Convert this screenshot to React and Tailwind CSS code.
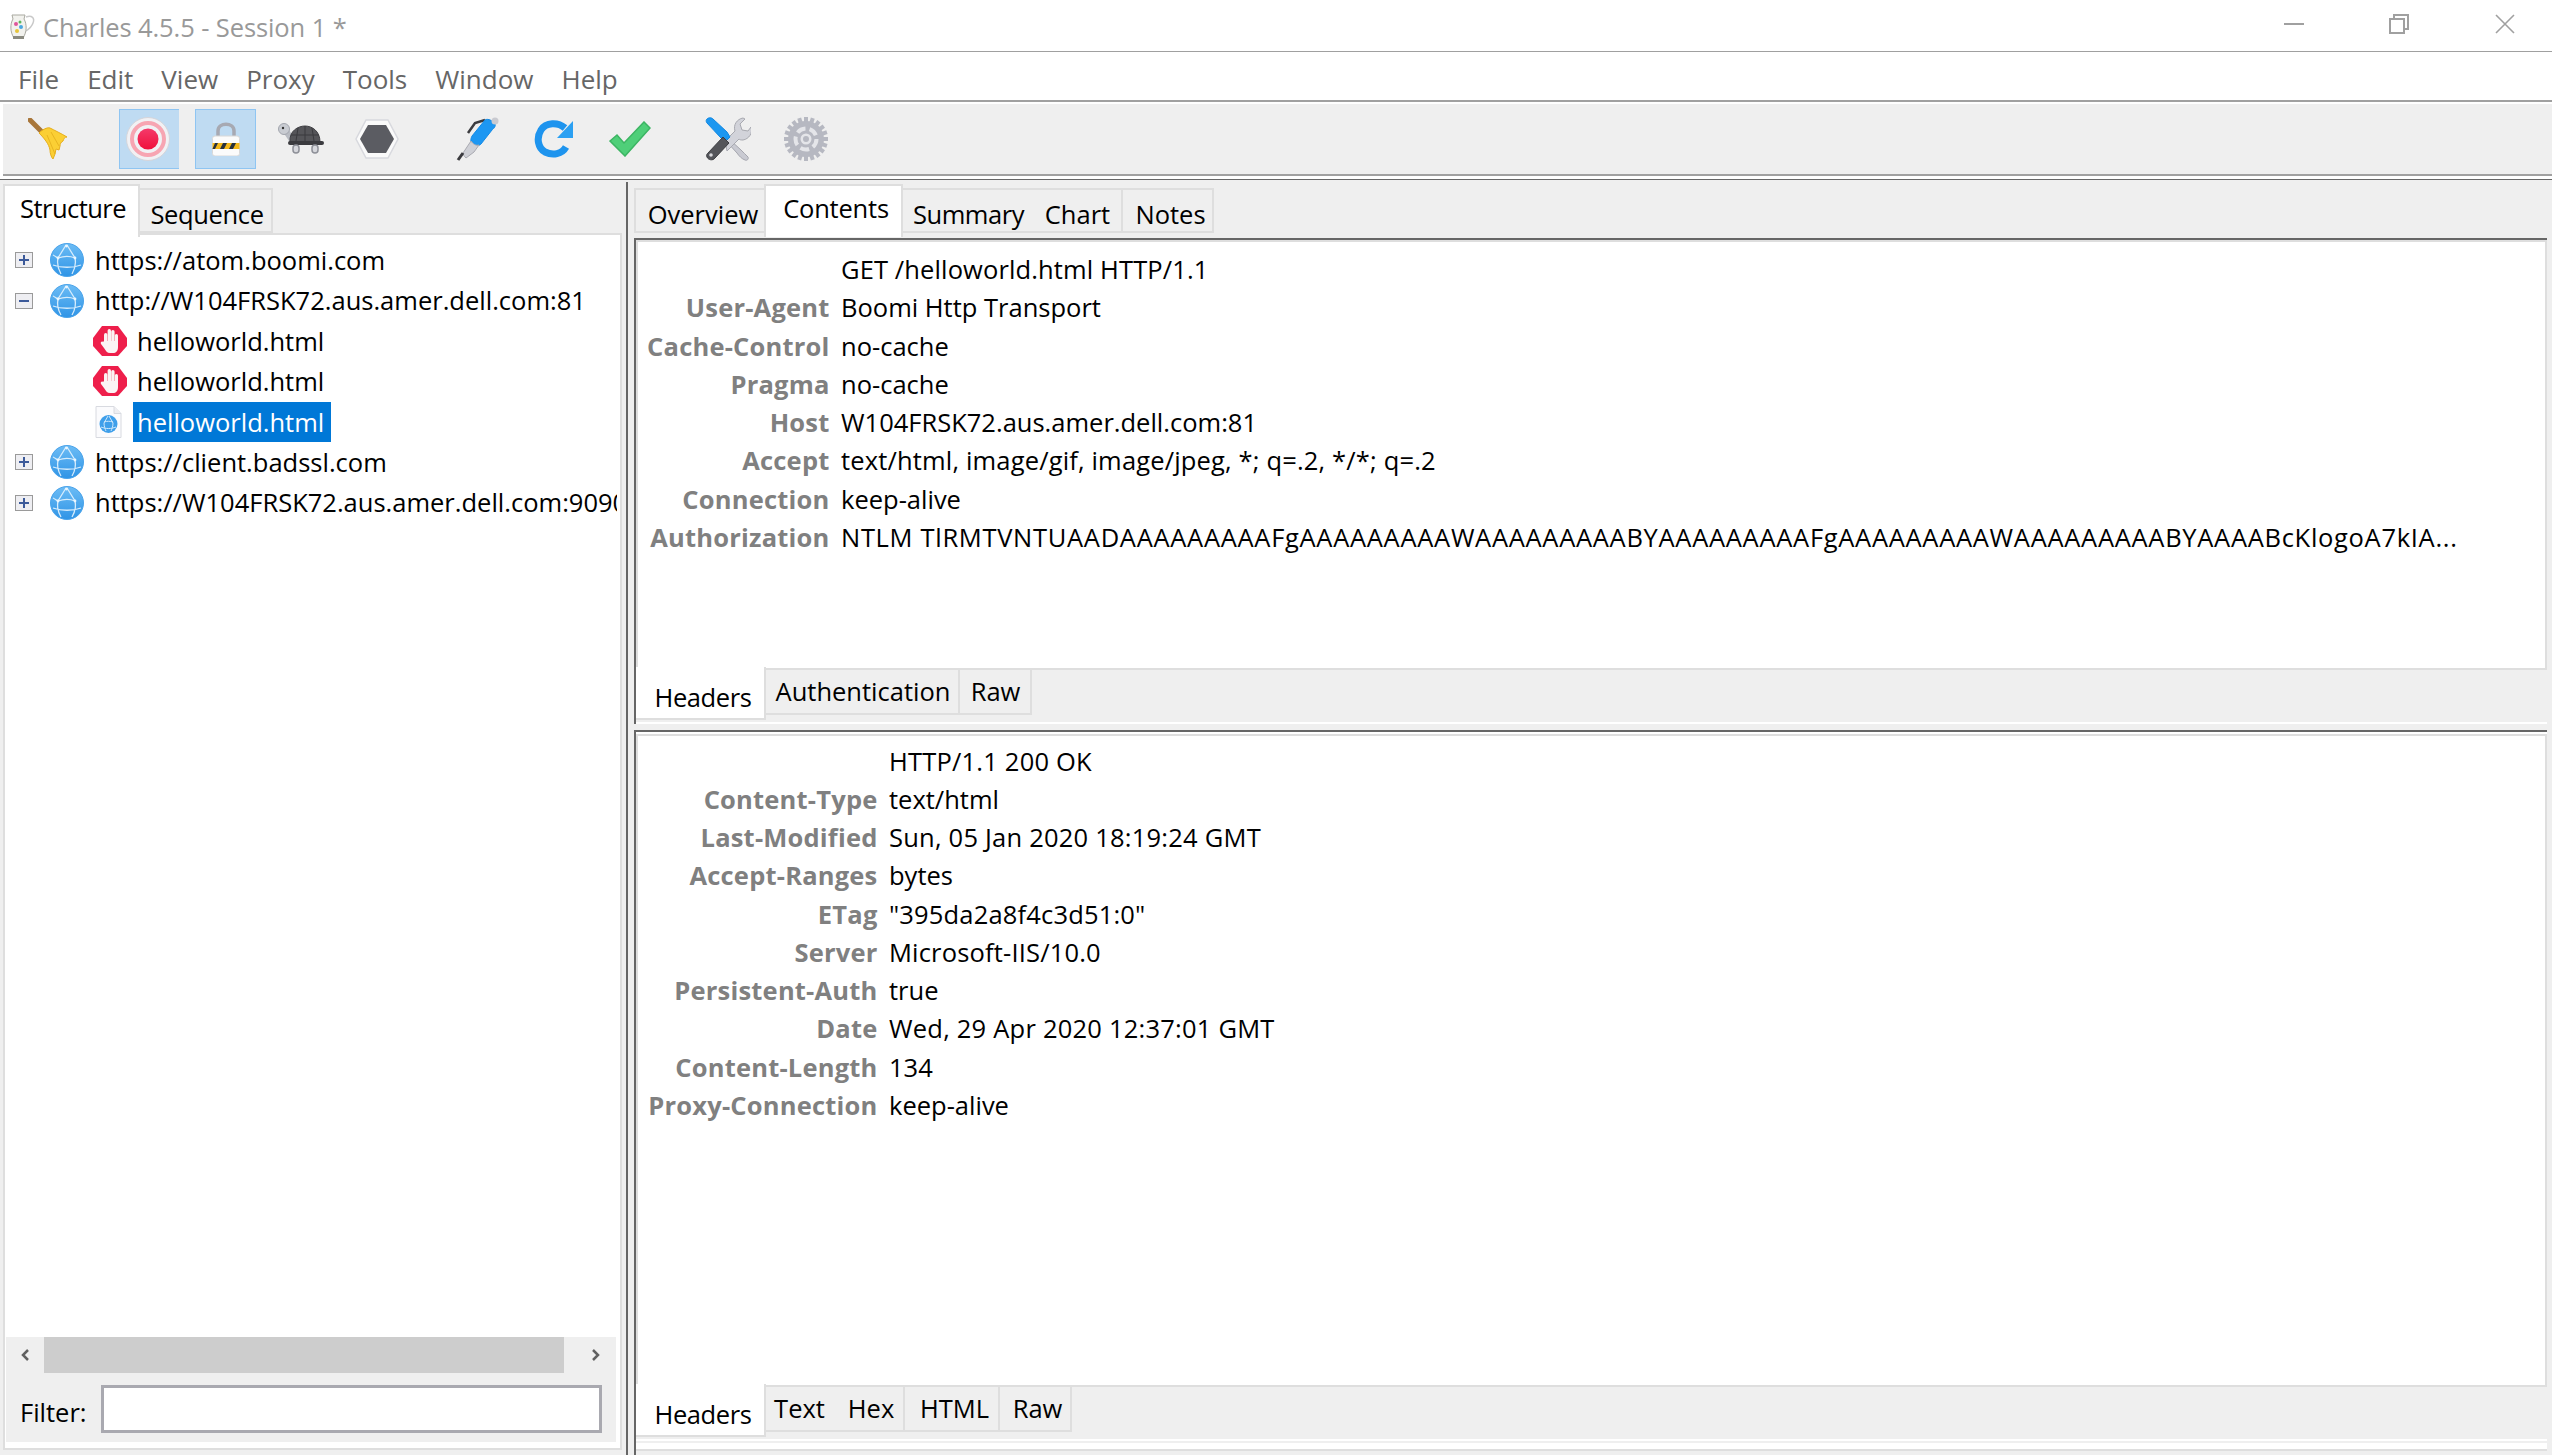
const FONT = "font-['Open_Sans','Noto_Sans',sans-serif]"

const MENUS = ['File', 'Edit', 'View', 'Proxy', 'Tools', 'Window', 'Help']

const REQUEST = [
  ['', 'GET /helloworld.html HTTP/1.1', 'tracking-[0.12px]'],
  ['User-Agent', 'Boomi Http Transport'],
  ['Cache-Control', 'no-cache'],
  ['Pragma', 'no-cache'],
  ['Host', 'W104FRSK72.aus.amer.dell.com:81'],
  ['Accept', 'text/html, image/gif, image/jpeg, *; q=.2, */*; q=.2', 'tracking-[0.16px]'],
  ['Connection', 'keep-alive'],
  ['Authorization', 'NTLM TlRMTVNTUAADAAAAAAAAAFgAAAAAAAAAWAAAAAAAAABYAAAAAAAAAFgAAAAAAAAAWAAAAAAAAABYAAAABcKlogoA7kIA...', 'tracking-[0.69px]'],
]

const RESPONSE = [
  ['', 'HTTP/1.1 200 OK', 'tracking-[0.2px]'],
  ['Content-Type', 'text/html'],
  ['Last-Modified', 'Sun, 05 Jan 2020 18:19:24 GMT', 'tracking-[0.22px]'],
  ['Accept-Ranges', 'bytes'],
  ['ETag', '"395da2a8f4c3d51:0"', 'tracking-[0.17px]'],
  ['Server', 'Microsoft-IIS/10.0', 'tracking-[0.17px]'],
  ['Persistent-Auth', 'true'],
  ['Date', 'Wed, 29 Apr 2020 12:37:01 GMT', 'tracking-[0.22px]'],
  ['Content-Length', '134'],
  ['Proxy-Connection', 'keep-alive'],
]

function Jug() {
  return (
    <svg width="28" height="26" viewBox="0 0 28 26" className="mr-[7px] mt-[4px]">
      <path d="M18 4c6-2 9 1 7 6-1 3-4 6-7 8" fill="none" stroke="#c9c9c9" strokeWidth="1.5" />
      <path d="M4 2h13l-1 4c3 5 3 13-1 19H6C2 19 2 11 5 6z" fill="#f2f2ee" stroke="#a9a9a0" />
      <circle cx="8" cy="11" r="2" fill="#e0559a" />
      <circle cx="13" cy="14" r="2" fill="#4aa7e0" />
      <circle cx="9" cy="18" r="2" fill="#e6c53a" />
      <circle cx="12" cy="9" r="1.5" fill="#5cb85c" />
      <rect x="5" y="23" width="11" height="3" fill="#8a8a80" />
    </svg>
  )
}

function Broom() {
  return (
    <svg width="40" height="42" viewBox="0 0 40 42">
      <path d="M2 2 14 14" stroke="#a8763a" strokeWidth="5" strokeLinecap="round" />
      <path d="M11 15c3-3 8-6 11-5 4 2 12 6 17 9-3 0-3 2-4 4-2 1-3 3-3 5l-1 4-3-1-1 5-2 5c-2-2-3-6-3-9-1-6-6-12-11-17z" fill="#fbcf34" stroke="#e6ae1d" strokeWidth="1" />
      <path d="M23 14 31 28M19 17 27 36" stroke="#e8b520" strokeWidth="1" fill="none" />
    </svg>
  )
}

function RecordIcon() {
  return (
    <svg width="44" height="46" viewBox="0 0 44 46">
      <defs>
        <linearGradient id="recRed" x1="0" y1="0" x2="0" y2="1">
          <stop offset="0" stopColor="#f43a6a" />
          <stop offset="1" stopColor="#f0103c" />
        </linearGradient>
      </defs>
      <circle cx="22" cy="23" r="21.5" fill="#f1f1f4" stroke="#d5d5da" />
      <circle cx="22" cy="23" r="16" fill="none" stroke="#f7a5b2" strokeWidth="4" />
      <circle cx="22" cy="23" r="10.5" fill="url(#recRed)" />
    </svg>
  )
}

function LockIcon() {
  return (
    <svg width="28" height="34" viewBox="0 0 28 34">
      <path d="M6 15V9c0-9 16-9 16 0v6" fill="none" stroke="#a7a9b2" strokeWidth="3.5" />
      <rect x="0.5" y="14" width="27" height="20" rx="2.5" fill="#fbfbfb" stroke="#d8d8d8" />
      <rect x="0.5" y="21" width="27" height="6" fill="#f2b71a" />
      <path d="M3 21h3l-3 6H0.5zM11 21h4l-3 6H8zM20 21h4l-3 6h-4z" fill="#26303c" />
    </svg>
  )
}

function Turtle() {
  return (
    <svg width="46" height="32" viewBox="0 0 46 32">
      <path d="M8 8 14 17" stroke="#b9bcc3" strokeWidth="6" strokeLinecap="round" />
      <circle cx="6" cy="6" r="5.5" fill="#c9ccd2" stroke="#a2a5ad" />
      <circle cx="5" cy="5" r="1.2" fill="#333333" />
      <path d="M12 19C11 8 20 3 27 3s15 5 15 16z" fill="#555559" stroke="#3f3f43" />
      <path d="M20 5 18 18M27 3v15M34 5l2 13M13 12h28" stroke="#3a3a3e" strokeWidth="1" fill="none" />
      <rect x="10" y="18" width="36" height="4" rx="2" fill="#3b3b3f" />
      <rect x="15" y="22" width="6" height="8" rx="3" fill="#d6d7dc" stroke="#8e9098" strokeWidth="1.5" />
      <rect x="34" y="22" width="6" height="8" rx="3" fill="#d6d7dc" stroke="#8e9098" strokeWidth="1.5" />
    </svg>
  )
}

function Hex() {
  return (
    <svg width="44" height="40" viewBox="0 0 44 40">
      <path d="M11 1h22l10 19-10 19H11L1 20z" fill="#fafafa" stroke="#d8d9de" strokeWidth="1.5" />
      <path d="M13 6h18l8 14-8 14H13L5 20z" fill="#5b5c62" />
    </svg>
  )
}

function Pen() {
  return (
    <svg width="44" height="44" viewBox="0 0 44 44">
      <path d="M13 16 20 6l10-3" fill="none" stroke="#3b3b3f" strokeWidth="2.5" />
      <path d="M30 3c3-2 8 1 10 4 1 3-2 5-3 6L26 27c-2 2-6 3-9 0-2-3-1-6 0-8z" fill="#1d97f2" stroke="#128ae6" />
      <circle cx="40" cy="4" r="3.5" fill="#c9cad0" />
      <path d="M16 24c2 3 5 5 8 4l-5 7-8 6c-2-2-3-3-3-5z" fill="#cfd0d6" stroke="#a9aab1" />
      <path d="M8 36 3 43" stroke="#3b3b3f" strokeWidth="3" />
    </svg>
  )
}

function Refresh() {
  return (
    <svg width="40" height="40" viewBox="0 0 40 40">
      <path d="M31 9C24 3 12 3 7 11c-5 8-3 18 4 22 8 4 17 2 21-5" fill="none" stroke="#1e94ee" strokeWidth="7" />
      <path d="M39 2v17H23z" fill="#2ba0f2" />
    </svg>
  )
}

function Check() {
  return (
    <svg width="43" height="36" viewBox="0 0 43 36">
      <path d="M2 20 9 14l7 8L36 1l6 6-25 28z" fill="#4fcf79" stroke="#3cb563" strokeWidth="1.5" />
    </svg>
  )
}

function Tools() {
  return (
    <svg width="46" height="44" viewBox="0 0 46 44">
      <path d="M24 22 36 33c2 2 5 5 7 7 1 2-1 4-3 3-3-1-6-4-8-7L22 25z" fill="#c9cad2" stroke="#a5a6ae" />
      <path d="M20 24 30 14c-2-6 2-12 8-13l2 1-5 5 2 6 6 1 3-4c2 6-2 12-8 13-2 0-3 0-4-1L22 34z" fill="#d2d3da" stroke="#a8a9b0" />
      <path d="M2 6c-3-4 3-7 6-4l14 13 3 5-4 4-5-3C11 16 7 11 2 6z" fill="#1c97f0" stroke="#1188e2" />
      <path d="M18 20 24 26 10 41c-2 3-7 2-8-1-1-2 0-3 1-4z" fill="#54555a" stroke="#3c3d41" />
      <circle cx="6" cy="38" r="1.8" fill="#d8d8dc" />
    </svg>
  )
}

function Gear() {
  const teeth = Array.from({ length: 20 }, (_, i) => i * 18)
  return (
    <svg width="44" height="44" viewBox="0 0 44 44">
      {teeth.map((a) => (
        <rect key={a} x="20" y="0" width="4" height="6" fill="#b6b8c1" transform={`rotate(${a} 22 22)`} />
      ))}
      <circle cx="22" cy="22" r="18" fill="#b6b8c1" />
      <circle cx="22" cy="22" r="10.5" fill="none" stroke="#e4e5e9" strokeWidth="4" strokeDasharray="9 4.2" />
      <circle cx="22" cy="22" r="5.5" fill="#e4e5e9" />
      <circle cx="22" cy="22" r="3" fill="#b6b8c1" />
    </svg>
  )
}

function Globe() {
  return (
    <svg width="34" height="34" viewBox="0 0 34 34" className="shrink-0">
      <defs>
        <linearGradient id="globeFill" x1="0" y1="0" x2="0" y2="1">
          <stop offset="0" stopColor="#6cbcf5" />
          <stop offset="1" stopColor="#2f94e6" />
        </linearGradient>
      </defs>
      <circle cx="17" cy="17" r="16.5" fill="url(#globeFill)" stroke="#4aa3ea" strokeWidth="1" />
      <path d="M16 2 8 15c-1 5 0 11 3 16M17 2l8 13c1 5 0 11-3 16M3 22c8 3 20 3 28 0M8 15c6-2 12-2 17 0M3 12c2 1 3 2 5 3" fill="none" stroke="#d6ecfc" strokeWidth="1.3" />
      <circle cx="8" cy="15" r="1.4" fill="#eaf6ff" />
      <circle cx="25" cy="15" r="1.4" fill="#eaf6ff" />
      <circle cx="16.5" cy="3" r="1.4" fill="#eaf6ff" />
    </svg>
  )
}

function StopHand() {
  return (
    <svg width="34" height="30" viewBox="0 0 34 30" className="shrink-0">
      <path d="M9 0h16l9 12v8l-9 10H9L0 20v-8z" fill="#ee1f4b" />
      <g fill="#fbf4f4">
        <rect x="11" y="7" width="3.4" height="14" rx="1.7" />
        <rect x="14.6" y="3" width="3.4" height="16" rx="1.7" />
        <rect x="18.2" y="4" width="3.4" height="15" rx="1.7" />
        <rect x="21.8" y="8" width="3.2" height="12" rx="1.6" />
        <path d="M11 15h14v6c0 4-2 6-5 6h-3c-3 0-4-2-6-5l-3-4c-1-2 1-3 2-2z" />
      </g>
    </svg>
  )
}

function DocIcon() {
  return (
    <svg width="27" height="32" viewBox="0 0 27 32" className="ml-[2px] shrink-0">
      <path d="M1 .5h18l7 7v24H1z" fill="#fbfbfd" stroke="#d8dae0" />
      <path d="M19 .5v7h7" fill="#eeeef2" stroke="#d8dae0" />
      <circle cx="13.5" cy="18" r="9" fill="#3f9fea" />
      <path d="M13 10 9 17c0 3 1 6 2 8M14 10l4 7c0 3-1 6-2 8M6 21c5 2 10 2 15 0M9 16c3-1 6-1 9 0" fill="none" stroke="#cfe8fb" strokeWidth="1" />
    </svg>
  )
}

function Expander({ open }) {
  return (
    <span className="relative mr-[17px] ml-[10px] h-[16px] w-[18px] shrink-0 border border-[#9a9a9a] bg-[#eeeef2]">
      <span className="absolute top-[6px] left-[3px] h-[2px] w-[10px] bg-[#3c5a9a]" />
      {!open && <span className="absolute top-[2px] left-[7px] h-[10px] w-[2px] bg-[#3c5a9a]" />}
    </span>
  )
}

function HostRow({ label, open }) {
  return (
    <div className="flex h-[40.4px] items-center">
      <Expander open={open} />
      <Globe />
      <span className="ml-[11px] overflow-hidden whitespace-nowrap">{label}</span>
    </div>
  )
}

function FileRow({ icon, selected }) {
  return (
    <div className="flex h-[40.4px] items-center pl-[85px]">
      <span className="flex w-[43px] shrink-0 items-center pl-[3px]">{icon}</span>
      <span className={selected ? 'flex h-[40px] items-center bg-[#0078d7] pr-[7px] pl-[4px] text-white' : 'px-[4px]'}>helloworld.html</span>
    </div>
  )
}

function TopTab({ label, active, w, last }) {
  if (active) {
    return (
      <div className={`relative z-10 flex h-[53px] items-center justify-center border-x-2 border-t-2 border-[#dedede] bg-white pb-[6px] ${w}`}>
        {label}
      </div>
    )
  }
  return (
    <div className={`flex h-[45px] items-center justify-center self-start mt-[4px] border-t-2 border-b-2 border-[#dedede] bg-[#efefef] pt-[8px] ${last ? 'border-r-2' : ''} ${w}`}>
      {label}
    </div>
  )
}

function BottomTab({ label, active, w, border }) {
  if (active) {
    return (
      <div className={`relative z-10 -mt-[3px] flex h-[53px] items-center justify-center border-r-2 border-b-2 border-[#dedede] bg-white pt-[9px] tracking-[-0.4px] ${w}`}>
        {label}
      </div>
    )
  }
  return (
    <div className={`flex h-[45px] items-center justify-center border-b-2 border-[#dedede] ${border ? 'border-r-2' : ''} ${w}`}>
      {label}
    </div>
  )
}

function HeaderRows({ rows, labelW }) {
  return rows.map(([k, v, cls]) => (
    <div key={v} className="flex h-[38.25px] items-center whitespace-nowrap">
      <span className={`shrink-0 pr-[11.5px] text-right font-bold tracking-[0.2px] text-[#808080] ${labelW}`}>{k}</span>
      <span className={cls}>{v}</span>
    </div>
  ))
}

export default function App() {
  return (
    <div className={`flex h-[1455px] w-[2552px] flex-col overflow-hidden bg-white text-[25.5px] text-black ${FONT}`}>
      {/* title bar */}
      <div className="flex h-[52px] shrink-0 items-center border-b border-[#a0a0a0] pb-[3px] pl-[8px] pr-[37px] text-[#999999]">
        <Jug />
        <span className="flex-1 pt-[6px] tracking-[-0.1px]">Charles 4.5.5 - Session 1 *</span>
        <div className="h-[2px] w-[20px] bg-[#a0a0a0]" />
        <svg width="20" height="20" viewBox="0 0 20 20" className="ml-[85px]" fill="none" stroke="#a0a0a0" strokeWidth="2">
          <rect x="1" y="5" width="14" height="14" />
          <path d="M5 5V1h14v14h-4" />
        </svg>
        <svg width="20" height="20" viewBox="0 0 20 20" className="ml-[86px]" stroke="#a0a0a0" strokeWidth="1.6">
          <path d="M1 1 19 19M19 1 1 19" />
        </svg>
      </div>

      {/* menu */}
      <div className="flex h-[50px] shrink-0 items-center gap-[28px] border-b-2 border-[#a0a0a0] pl-[18px] pt-[6px] text-[26px] text-[#666666]">
        {MENUS.map((m) => (
          <span key={m}>{m}</span>
        ))}
      </div>

      {/* toolbar */}
      <div className="ml-[3px] mt-[2px] flex h-[72px] shrink-0 items-center border-b-2 border-[#a0a0a0] bg-[#efefef]">
        <div className="ml-[25px] w-[40px]"><Broom /></div>
        <div className="ml-[51px] flex h-[60px] w-[60px] items-center justify-center border border-r-0 border-[#8fc5f2] bg-[#bfdbf2] pr-[3px]"><RecordIcon /></div>
        <div className="ml-[16px] flex h-[60px] w-[61px] items-center justify-center border border-[#8fc5f2] bg-[#bfdbf2]"><LockIcon /></div>
        <div className="ml-[22px]"><Turtle /></div>
        <div className="ml-[31px]"><Hex /></div>
        <div className="ml-[56px]"><Pen /></div>
        <div className="ml-[35px]"><Refresh /></div>
        <div className="ml-[34px]"><Check /></div>
        <div className="ml-[54px]"><Tools /></div>
        <div className="ml-[33px]"><Gear /></div>
      </div>

      <div className="mt-[3px] h-[1px] shrink-0 bg-[#666666]" />

      {/* main */}
      <div className="flex min-h-0 flex-1 bg-[#efefef] pt-[4px]">
        {/* left: structure */}
        <div className="flex w-[626px] shrink-0 flex-col pl-[3px] pr-[4px]">
          <div className="flex h-[53px] shrink-0">
            <TopTab label="Structure" active w="w-[137px] pl-[3px] tracking-[-0.55px]" />
            <TopTab label="Sequence" last w="w-[133px] pl-[3px] tracking-[-0.35px]" />
          </div>
          <div className="-mt-[4px] flex h-[1217px] shrink-0 flex-col border-2 border-[#dedede] bg-white">
            <div className="min-h-0 w-[612px] flex-1 overflow-hidden pt-[5px]">
              <HostRow label="https://atom.boomi.com" />
              <HostRow label="http://W104FRSK72.aus.amer.dell.com:81" open />
              <FileRow icon={<StopHand />} />
              <FileRow icon={<StopHand />} />
              <FileRow icon={<DocIcon />} selected />
              <HostRow label="https://client.badssl.com" />
              <HostRow label="https://W104FRSK72.aus.amer.dell.com:9090" />
            </div>
            <div className="mx-[1px] mb-[6px] w-[610px] shrink-0 bg-[#efefef]">
              <div className="flex h-[36px] items-center">
                <svg width="38" height="36" viewBox="0 0 38 36" fill="none" stroke="#606060" strokeWidth="2.5"><path d="M22 13l-5 5 5 5" /></svg>
                <div className="h-full w-[520px] bg-[#cdcdcd]" />
                <svg width="52" height="36" viewBox="0 0 52 36" fill="none" stroke="#606060" strokeWidth="2.5"><path d="M29 13l5 5-5 5" /></svg>
              </div>
              <div className="flex items-center pt-[12px] pb-[9px] pl-[14px]">
                <span className="w-[81px] pt-[7px]">Filter:</span>
                <div className="h-[48px] w-[501px] border-[3px] border-[#a9a9b0] bg-white" />
              </div>
            </div>
          </div>
        </div>

        {/* splitter */}
        <div className="-mt-[2px] w-[2px] shrink-0 bg-[#666666]" />

        {/* right: contents */}
        <div className="flex min-w-0 flex-1 flex-col pl-[6px] pr-[5px]">
          <div className="flex h-[53px] shrink-0">
            <TopTab label="Overview" w="w-[130px] border-l-2 pl-[6px]" />
            <TopTab label="Contents" active w="w-[139px] pl-[5px] tracking-[-0.2px]" />
            <TopTab label="Summary" w="w-[131px] tracking-[-0.45px]" />
            <TopTab label="Chart" w="w-[87px]" />
            <TopTab label="Notes" last w="w-[93px] border-l-2 pl-[6px]" />
          </div>

          <div className="mt-[1px] flex h-[486px] shrink-0 flex-col border-t-2 border-l-2 border-[#666666]">
            <div className="flex min-h-0 flex-1 flex-col overflow-hidden border-2 border-[#dedede] bg-white pt-[8px]">
              <HeaderRows rows={REQUEST} labelW="w-[203px]" />
            </div>
            <div className="flex h-[52px] shrink-0">
              <BottomTab label="Headers" active w="w-[130px] pl-[6px]" />
              <BottomTab label="Authentication" border w="w-[194px] pl-[2px]" />
              <BottomTab label="Raw" border w="w-[72px] pl-[1px]" />
            </div>
            <div className="h-[2px] shrink-0 bg-white" />
          </div>

          <div className="mt-[6px] flex min-h-0 flex-1 flex-col border-t-2 border-l-2 border-[#666666]">
            <div className="h-[2px] shrink-0 bg-white" />
            <div className="flex min-h-0 flex-1 flex-col overflow-hidden border-2 border-[#dedede] bg-white pt-[5.5px]">
              <HeaderRows rows={RESPONSE} labelW="w-[251px]" />
            </div>
            <div className="flex h-[52px] shrink-0">
              <BottomTab label="Headers" active w="w-[130px] pl-[6px]" />
              <BottomTab label="Text" w="w-[75px] pr-[8px]" />
              <BottomTab label="Hex" border w="w-[64px] pr-[2px]" />
              <BottomTab label="HTML" border w="w-[95px] pl-[6px]" />
              <BottomTab label="Raw" border w="w-[72px] pl-[5px]" />
            </div>
            <div className="h-[2px] shrink-0 bg-white" />
            <div className="h-[2px] shrink-0 bg-[#efefef]" />
            <div className="h-[8px] shrink-0 border-b-2 border-[#dedede] bg-white" />
            <div className="h-[4px] shrink-0" />
          </div>
        </div>
      </div>
    </div>
  )
}
